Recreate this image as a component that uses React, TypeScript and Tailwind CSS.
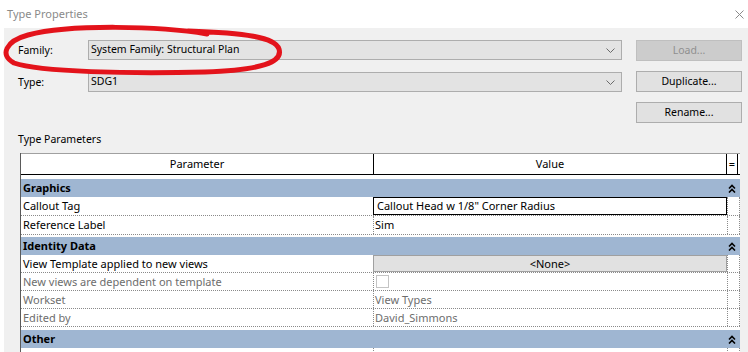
import { ReactNode } from 'react'

function ChevronDown() {
    return (
        <svg width="9" height="5" viewBox="0 0 9 5" className="shrink-0">
            <path d="M0.5 0.5 L4.5 4.5 L8.5 0.5" fill="none" stroke="#6a6a6a" strokeWidth="1" />
        </svg>
    )
}

function DoubleUp() {
    return (
        <svg width="8" height="9" viewBox="0 0 8 9" className="shrink-0">
            <path d="M1 4.5 L4 1.5 L7 4.5 M1 8.5 L4 5.5 L7 8.5" fill="none" stroke="#000" strokeWidth="1.6" />
        </svg>
    )
}

function Combo({ value }: { value: string }) {
    return (
        <div className="flex h-[20px] w-[534px] items-center justify-between border border-[#adadad] bg-[#e3e3e3] pl-[2px] pr-[6px]">
            <span>{value}</span>
            <ChevronDown />
        </div>
    )
}

function Btn({ children, disabled }: { children: ReactNode; disabled?: boolean }) {
    return (
        <div
            className={
                disabled
                    ? 'flex h-[21px] w-[106px] items-center justify-center border border-[#bfbfbf] bg-[#cccccc] text-[#8f8f8f]'
                    : 'flex h-[21px] w-[106px] items-center justify-center border border-[#adadad] bg-[#e1e1e1] text-black'
            }
        >
            {children}
        </div>
    )
}

function GroupRow({ label, gap }: { label: string; gap: 'sm' | 'md' }) {
    return (
        <div
            className={
                gap === 'md'
                    ? 'mt-[3px] flex h-[18px] items-center justify-between bg-[#9fb6d2] pl-[2px] pr-[4px] font-bold'
                    : 'mt-[2px] flex h-[18px] items-center justify-between bg-[#9fb6d2] pl-[2px] pr-[4px] font-bold'
            }
        >
            <span>{label}</span>
            <DoubleUp />
        </div>
    )
}

type Kind = 'text' | 'box' | 'button' | 'check'

function DataRow({ label, value, dim, kind = 'text', tall }: { label: string; value?: string; dim?: boolean; kind?: Kind; tall?: boolean }) {
    const color = dim ? 'text-[#6d6d6d]' : 'text-black'
    return (
        <div className={tall ? 'flex h-[19px] border-b border-dotted border-[#8a8a8a]' : 'flex h-[18px] border-b border-dotted border-[#8a8a8a]'}>
            <div className={`w-[352px] truncate pl-[2px] leading-[17px] ${color}`}>{label}</div>
            {kind === 'box' && (
                <div className="w-[354px] border border-black pl-[3px] leading-[16px]">{value}</div>
            )}
            {kind === 'text' && (
                <div className={`w-[354px] border-l border-dotted border-[#8a8a8a] pl-[1px] leading-[17px] ${color}`}>{value}</div>
            )}
            {kind === 'button' && (
                <div className="flex w-[354px] items-center justify-center border border-[#a0a0a0] bg-[#e1e1e1] leading-[15px]">
                    {value}
                </div>
            )}
            {kind === 'check' && (
                <div className="flex w-[354px] items-center border-l border-dotted border-[#8a8a8a] pl-[2px]">
                    <div className="h-[13px] w-[13px] border border-[#c4c4c4] bg-white" />
                </div>
            )}
            <div className="w-[13px] border-x border-dotted border-[#8a8a8a]" />
        </div>
    )
}

export default function App() {
    return (
        <div className="relative flex h-[352px] w-[748px] flex-col overflow-hidden bg-white font-['Noto_Sans',sans-serif] text-[10.5px] text-black">
            {/* title bar */}
            <div className="flex h-[28px] shrink-0 items-center justify-between pl-[7px] pr-[4px]">
                <span className="text-[11px] text-[#8a8a8a]">Type Properties</span>
                <svg width="9" height="9" viewBox="0 0 9 9">
                    <path d="M0.5 0.5 L8.5 8.5 M8.5 0.5 L0.5 8.5" stroke="#8a8a8a" strokeWidth="1" fill="none" />
                </svg>
            </div>

            <div className="ml-[4px] flex-1 bg-[#f0f0f0] pt-[12px]">
                <div className="flex items-start">
                    <div className="w-[84px] pl-[14px] leading-[20px]">Family:</div>
                    <Combo value="System Family: Structural Plan" />
                    <div className="ml-[14px]">
                        <Btn disabled>Load...</Btn>
                    </div>
                </div>
                <div className="mt-[10px] flex items-start">
                    <div className="mt-[1px] w-[84px] pl-[14px] leading-[20px]">Type:</div>
                    <div className="mt-[1px]">
                        <Combo value="SDG1" />
                    </div>
                    <div className="ml-[14px]">
                        <Btn>Duplicate...</Btn>
                    </div>
                </div>
                <div className="mt-[10px] flex justify-end pr-[6px]">
                    <Btn>Rename...</Btn>
                </div>

                <div className="mt-[8px] pl-[14px] leading-[16px]">Type Parameters</div>

                {/* parameters table */}
                <div className="ml-[16px] mt-[6px] w-[720px] border-l border-[#5a5a5a] bg-white text-[11px]">
                    <div className="flex h-[22px] border-t border-b border-t-[#a0a0a0] border-b-black">
                        <div className="flex w-[353px] items-center justify-center border-r border-black">Parameter</div>
                        <div className="flex w-[353px] items-center justify-center border-r border-black">Value</div>
                        <div className="flex w-[11px] items-center justify-center border-r border-black">=</div>
                    </div>
                    <div className="w-[719px] pt-[1px]">
                        <GroupRow label="Graphics" gap="md" />
                        <DataRow label="Callout Tag" value={'Callout Head w 1/8" Corner Radius'} kind="box" tall />
                        <DataRow label="Reference Label" value="Sim" tall />
                        <GroupRow label="Identity Data" gap="sm" />
                        <DataRow label="View Template applied to new views" value="<None>" kind="button" />
                        <DataRow label="New views are dependent on template" dim kind="check" />
                        <DataRow label="Workset" value="View Types" dim />
                        <DataRow label="Edited by" value="David_Simmons" dim />
                        <GroupRow label="Other" gap="md" />
                        <DataRow label="" />
                    </div>
                </div>
            </div>

            {/* hand-drawn red highlight */}
            <svg className="pointer-events-none absolute left-0 top-0" width="300" height="90" viewBox="0 0 300 90">
                <path
                    d="M207 34 C160 26, 70 24, 28 35 C6 41, -1 55, 14 63 C40 72, 130 74, 205 72 C262 70, 283 62, 279 49 C275 37, 245 33, 188 31"
                    fill="none"
                    stroke="#e3131b"
                    strokeWidth="5"
                    strokeLinecap="round"
                />
            </svg>
        </div>
    )
}
